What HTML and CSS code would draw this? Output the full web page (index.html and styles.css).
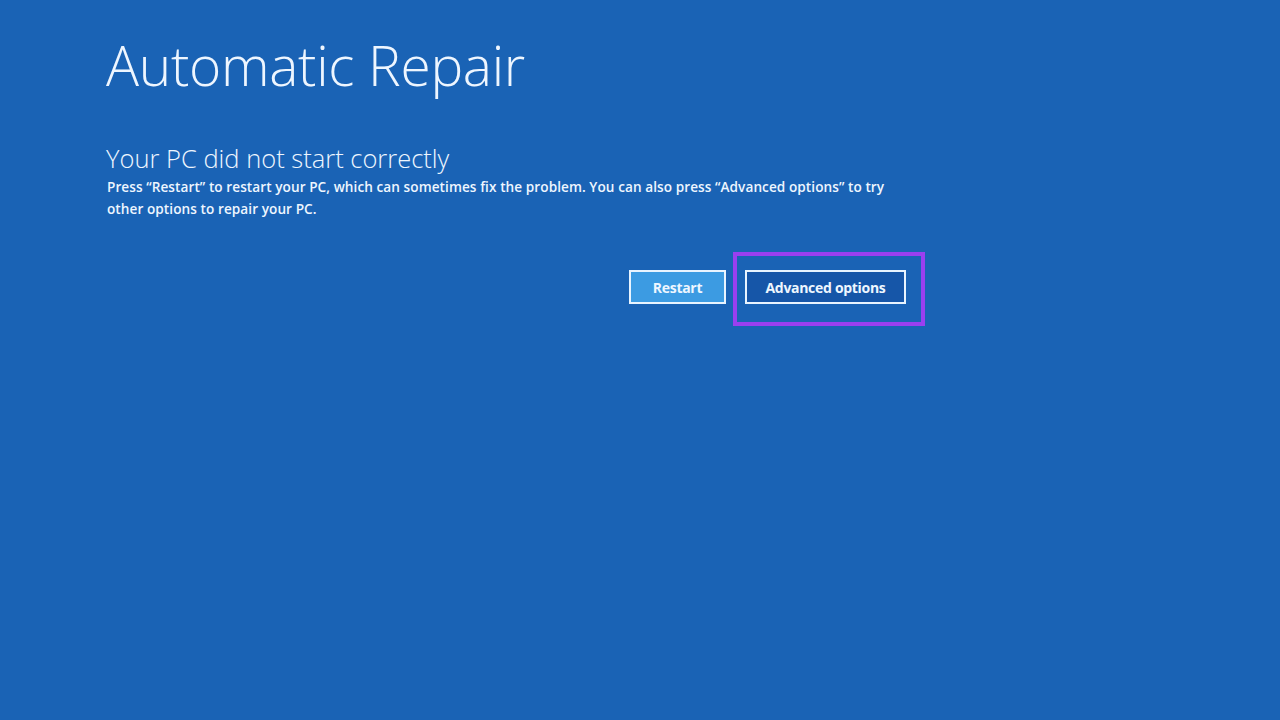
FILE: index.html
```html
<!DOCTYPE html>
<html>
<head>
    <title>Automatic Repair</title>
    <link rel="stylesheet" href="styles.css">
</head>
<body>
    <div class="screen">
        <h1>Automatic Repair</h1>
        <h2>Your PC did not start correctly</h2>
        <p class="info">Press “Restart” to restart your PC, which can sometimes fix the problem. You can also press “Advanced options” to try other options to repair your PC.</p>
        <div class="actions">
            <button class="btn btn-restart">Restart</button>
            <div class="highlight">
                <button class="btn btn-advanced">Advanced options</button>
            </div>
        </div>
    </div>
</body>
</html>
```

FILE: styles.css
```css
html, body {
    margin: 0;
    height: 100%;
}
body {
    background-color: #1a63b5;
    color: #eef6ff;
    font-family: "Open Sans", "Noto Sans", sans-serif;
    overflow: hidden;
}
.screen {
    padding: 29px 0 0 107px;
    width: 900px;
}
h1 {
    font-weight: 300;
    font-size: 55px;
    line-height: 72px;
    margin: 0 0 0 -1px;
    letter-spacing: -0.3px;
}
h2 {
    font-weight: 300;
    font-size: 25.5px;
    line-height: 34px;
    margin: 40px 0 0 -1px;
}
.info {
    font-size: 13.6px;
    font-weight: 600;
    line-height: 22px;
    margin: 1px 0 0;
    letter-spacing: 0.07px;
    width: 786px;
}
.actions {
    display: flex;
    align-items: flex-start;
    margin: 32px 0 0 522px;
}
.btn {
    flex-shrink: 0;
    font-family: inherit;
    font-size: 14px;
    font-weight: 700;
    color: #eef6ff;
    height: 34px;
    border: 2px solid #e8f4ff;
    padding: 0;
    letter-spacing: -0.3px;
}
.btn-restart {
    width: 97px;
    margin-top: 18px;
    background-color: #3c9be2;
}
.btn-advanced {
    width: 161px;
    background-color: #1656a8;
}
.highlight {
    flex-shrink: 0;
    margin-left: 7px;
    padding: 14px 15px 18px 8px;
    border: 4px solid #9a3ff0;
}
```
